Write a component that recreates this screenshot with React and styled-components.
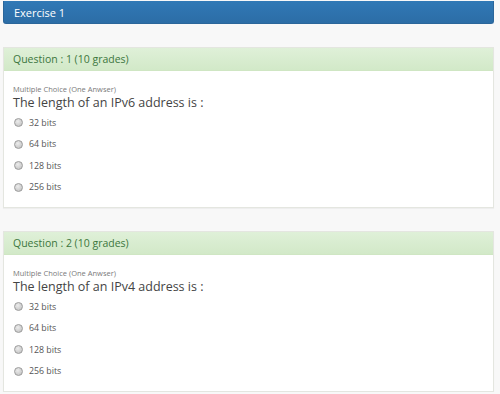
import React from 'react';
import styled, { createGlobalStyle } from 'styled-components';

const GlobalStyle = createGlobalStyle`
    html, body {
        margin: 0;
        padding: 0;
        background: #f8f8f8;
        font-family: "Open Sans", "Liberation Sans", sans-serif;
    }
`;

const Page = styled.div`
    display: flex;
    flex-direction: column;
    gap: 23px;
    width: 491px;
    padding: 1px 6px 0 3px;
`;

const TitleBar = styled.div`
    height: 23px;
    display: flex;
    align-items: center;
    padding-left: 10px;
    color: #fff;
    font-size: 11px;
    background: linear-gradient(#3179b6, #2c6da6);
    border: 1px solid #2b669a;
    border-top: none;
    border-radius: 0 0 3px 3px;
    box-sizing: border-box;
`;

const Card = styled.div`
    background: #fff;
    border: 1px solid #e4e6e0;
    box-shadow: 0 1px 1px rgba(0, 0, 0, 0.04);
`;

const CardHeader = styled.div`
    height: 22px;
    display: flex;
    align-items: center;
    padding-left: 9px;
    color: #3c763d;
    font-size: 10.5px;
    background: linear-gradient(#dff0d8, #d2e9c8);
    border-bottom: 1px solid #cfe6c3;
`;

const CardBody = styled.div`
    padding: 13px 9px 9px;
`;

const Kind = styled.div`
    font-size: 7.5px;
    color: #7a7a7a;
    line-height: 11px;
`;

const Prompt = styled.div`
    font-size: 12.5px;
    color: #444;
    line-height: 15px;
    margin-bottom: 2px;
`;

const Options = styled.div`
    display: flex;
    flex-direction: column;
`;

const Option = styled.label`
    display: flex;
    align-items: center;
    gap: 6px;
    height: 21.5px;
    padding-left: 1px;
    font-size: 8.8px;
    color: #555;
`;

const Radio = styled.input.attrs({ type: 'radio' })`
    appearance: none;
    margin: 0;
    width: 9px;
    height: 9px;
    border-radius: 50%;
    border: 1px solid #9c9c9c;
    background: radial-gradient(circle at 40% 35%, #ececec, #bcbcbc);
    box-sizing: border-box;
`;

const questions = [
    { num: 1, title: 'The length of an IPv6 address is :' },
    { num: 2, title: 'The length of an IPv4 address is :' },
];

const answers = ['32 bits', '64 bits', '128 bits', '256 bits'];

export default function App() {
    return (
        <>
            <GlobalStyle />
            <Page>
                <TitleBar>Exercise 1</TitleBar>
                {questions.map(q => (
                    <Card key={q.num}>
                        <CardHeader>Question : {q.num} (10 grades)</CardHeader>
                        <CardBody>
                            <Kind>Multiple Choice (One Anwser)</Kind>
                            <Prompt>{q.title}</Prompt>
                            <Options>
                                {answers.map(a => (
                                    <Option key={a}>
                                        <Radio name={`q${q.num}`} />
                                        {a}
                                    </Option>
                                ))}
                            </Options>
                        </CardBody>
                    </Card>
                ))}
            </Page>
        </>
    );
}
